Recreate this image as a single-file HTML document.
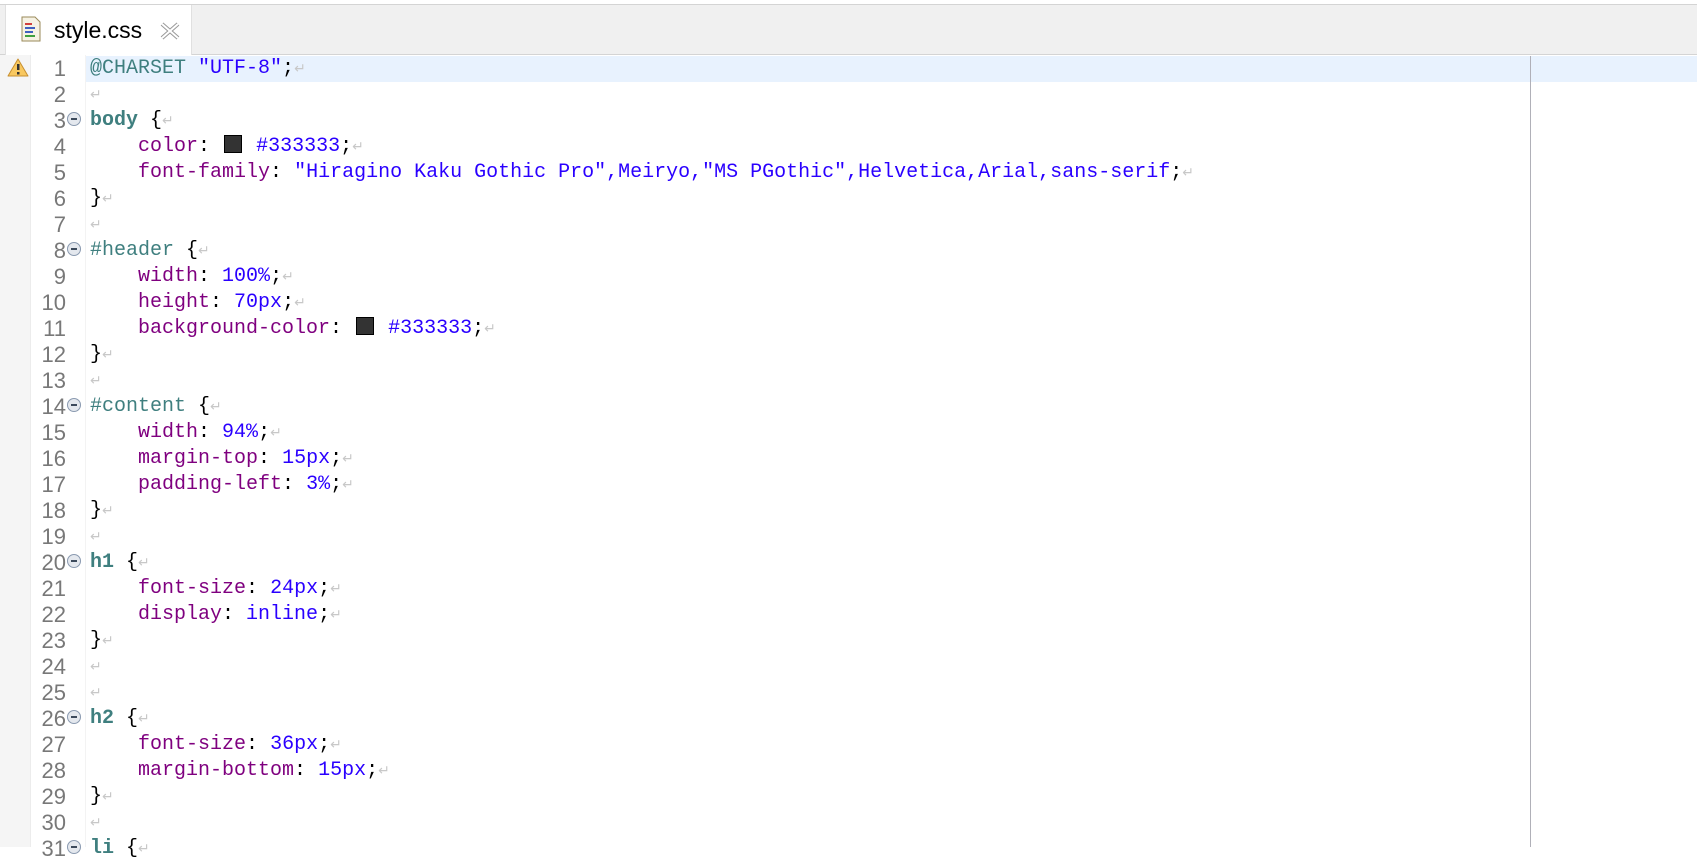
<!DOCTYPE html><html><head><style>
body{margin:0;width:1697px;height:847px;overflow:hidden;background:#fff;font-family:"Liberation Sans",sans-serif;position:relative}
.tabbar{position:absolute;left:0;top:4px;width:1697px;height:51px;background:#f0f0f0;border-top:1px solid #d4d4d4;border-bottom:1px solid #d4d4d4;box-sizing:border-box}
.tab{position:absolute;left:5px;top:0;width:185px;height:50px;background:#fff;border-left:1px solid #e0e0e0;border-right:1px solid #e0e0e0}
.tab span{position:absolute;left:48px;top:12px;font-size:23px;color:#000}
.strip{position:absolute;left:0;top:55px;width:30px;height:792px;background:#f5f5f5;border-right:1px solid #ececec}
.gline{position:absolute;left:85px;top:55px;width:1px;height:792px;background:#f3f3f3}
.hl{position:absolute;left:86px;top:56px;width:1611px;height:26px;background:#e8f2fe}
.margin{position:absolute;left:1530px;top:56px;width:1px;height:791px;background:#b0b0b8}
.ln{position:absolute;left:30px;width:36px;text-align:right;font-size:22px;color:#787878}
.ln div,.code div{height:26px;line-height:26px;overflow:hidden}
.fold{position:absolute;left:67px;width:12px;height:12px;border:1px solid #8a9ab0;border-radius:50%;background:#e4e8ee}
.fold:after{content:"";position:absolute;left:3px;top:5px;width:6px;height:2px;background:#3c4a5c}
.code{position:absolute;left:90px;top:56px;font-family:"Liberation Mono",monospace;font-size:20px;color:#000}
.code div{white-space:pre}
.s{color:#3f7f7f}.b{font-weight:bold}.p{color:#7f007f}.v{color:#2a00ff}.r{color:#c8c8c8;font-size:14px}
.sw{display:inline-block;width:16px;height:16px;background:#333;border:1px solid #000;vertical-align:-2px;margin:0 2px}
</style></head><body>
<div class="tabbar"><div class="tab">
<svg style="position:absolute;left:15px;top:11px" width="20" height="26" viewBox="0 0 20 26"><path d="M1 1h13l5 5v19H1z" fill="#f6f2e4" stroke="#9a8a5a"/><rect x="4" y="7" width="7" height="2" fill="#d04040"/><rect x="4" y="11" width="10" height="2" fill="#4060c0"/><rect x="4" y="15" width="8" height="2" fill="#4060c0"/><rect x="4" y="19" width="10" height="2" fill="#40a040"/></svg>
<span>style.css</span>
<svg style="position:absolute;left:154px;top:17px" width="20" height="18" viewBox="0 0 20 18"><path d="M2 2l16 14M18 2L2 16" stroke="#999" stroke-width="4"/><path d="M2 2l16 14M18 2L2 16" stroke="#fff" stroke-width="2"/></svg>
</div></div>
<div class="strip"></div><div class="gline"></div>
<div class="hl"></div><div class="margin"></div>
<svg style="position:absolute;left:7px;top:58px" width="22" height="20" viewBox="0 0 22 20"><path d="M11 1L21 18H1z" fill="#f8c860" stroke="#c89030" stroke-linejoin="round"/><rect x="10" y="6" width="2.5" height="6" fill="#333"/><rect x="10" y="14" width="2.5" height="2.5" fill="#333"/></svg>
<div class="ln" style="top:56px"><div>1</div><div>2</div><div>3</div><div>4</div><div>5</div><div>6</div><div>7</div><div>8</div><div>9</div><div>10</div><div>11</div><div>12</div><div>13</div><div>14</div><div>15</div><div>16</div><div>17</div><div>18</div><div>19</div><div>20</div><div>21</div><div>22</div><div>23</div><div>24</div><div>25</div><div>26</div><div>27</div><div>28</div><div>29</div><div>30</div><div>31</div></div>
<div class="fold" style="top:112px"></div><div class="fold" style="top:242px"></div><div class="fold" style="top:398px"></div><div class="fold" style="top:554px"></div><div class="fold" style="top:710px"></div><div class="fold" style="top:840px"></div>
<div class="code"><div><span class="s">@CHARSET</span> <span class="v">"UTF-8"</span>;<span class="r">↵</span></div><div><span class="r">↵</span></div><div><span class="s b">body</span> {<span class="r">↵</span></div><div>    <span class="p">color</span>: <span class="sw"></span> <span class="v">#333333</span>;<span class="r">↵</span></div><div>    <span class="p">font-family</span>: <span class="v">"Hiragino Kaku Gothic Pro",Meiryo,"MS PGothic",Helvetica,Arial,sans-serif</span>;<span class="r">↵</span></div><div>}<span class="r">↵</span></div><div><span class="r">↵</span></div><div><span class="s">#header</span> {<span class="r">↵</span></div><div>    <span class="p">width</span>: <span class="v">100%</span>;<span class="r">↵</span></div><div>    <span class="p">height</span>: <span class="v">70px</span>;<span class="r">↵</span></div><div>    <span class="p">background-color</span>: <span class="sw"></span> <span class="v">#333333</span>;<span class="r">↵</span></div><div>}<span class="r">↵</span></div><div><span class="r">↵</span></div><div><span class="s">#content</span> {<span class="r">↵</span></div><div>    <span class="p">width</span>: <span class="v">94%</span>;<span class="r">↵</span></div><div>    <span class="p">margin-top</span>: <span class="v">15px</span>;<span class="r">↵</span></div><div>    <span class="p">padding-left</span>: <span class="v">3%</span>;<span class="r">↵</span></div><div>}<span class="r">↵</span></div><div><span class="r">↵</span></div><div><span class="s b">h1</span> {<span class="r">↵</span></div><div>    <span class="p">font-size</span>: <span class="v">24px</span>;<span class="r">↵</span></div><div>    <span class="p">display</span>: <span class="v">inline</span>;<span class="r">↵</span></div><div>}<span class="r">↵</span></div><div><span class="r">↵</span></div><div><span class="r">↵</span></div><div><span class="s b">h2</span> {<span class="r">↵</span></div><div>    <span class="p">font-size</span>: <span class="v">36px</span>;<span class="r">↵</span></div><div>    <span class="p">margin-bottom</span>: <span class="v">15px</span>;<span class="r">↵</span></div><div>}<span class="r">↵</span></div><div><span class="r">↵</span></div><div><span class="s b">li</span> {<span class="r">↵</span></div></div>
</body></html>
